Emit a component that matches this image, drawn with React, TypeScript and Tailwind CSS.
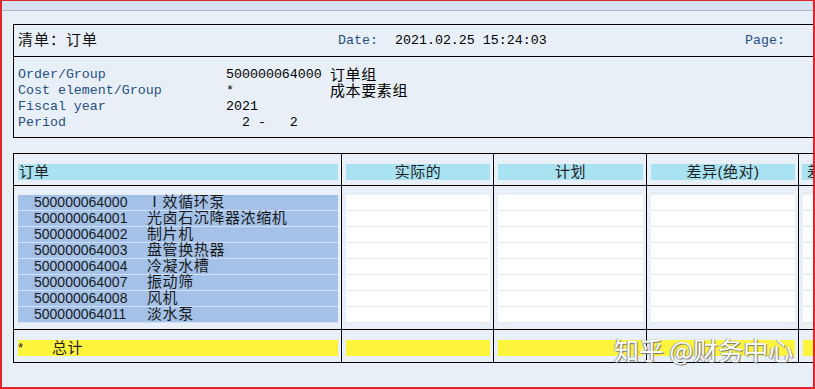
import React from "react";

const orders = [
  { id: "500000064000", name: "Ⅰ效循环泵" },
  { id: "500000064001", name: "光卤石沉降器浓缩机" },
  { id: "500000064002", name: "制片机" },
  { id: "500000064003", name: "盘管换热器" },
  { id: "500000064004", name: "冷凝水槽" },
  { id: "500000064007", name: "振动筛" },
  { id: "500000064008", name: "风机" },
  { id: "500000064011", name: "淡水泵" },
];

const mono = "font-['Liberation_Mono','Noto_Sans_CJK_SC',monospace]";
const cjk = "font-['Liberation_Sans','Noto_Sans_CJK_SC',sans-serif]";
const cols = "grid grid-cols-[328px_152px_153px_152px_120px]";

function InfoRow({ label, value, text }: { label: string; value: string; text?: string }) {
  return (
    <div className="flex h-[16px] items-center">
      <div className="w-[208px] text-[#1f4f86]">{label}</div>
      <div className="w-[104px] whitespace-pre text-black">{value}</div>
      {text && <div className={`${cjk} text-[15px] tracking-[0.6px] text-black`}>{text}</div>}
    </div>
  );
}

export default function App() {
  return (
    <div className="relative h-[389px] w-[815px] overflow-hidden border-x-2 border-t border-b-2 border-[#e0262b] bg-[#e9eff7]">
      <div className="h-[10px] border-b border-[#aeb7c4] bg-[#d6e2f0]" />

      {/* report header */}
      <div className={`${mono} ml-[11px] mt-[13px] w-[820px] border border-black text-[13.3px]`}>
        <div className="flex h-[32px] items-center border-b border-black">
          <div className={`${cjk} w-[324px] pl-[4px] text-[15px] tracking-[1px] text-[#111]`}>清单：订单</div>
          <div className="w-[57px] text-[#1f4f86]">Date:</div>
          <div className="w-[350px] text-black">2021.02.25 15:24:03</div>
          <div className="text-[#1f4f86]">Page:</div>
        </div>
        <div className="h-[80px] pl-[4px] pt-[10px]">
          <InfoRow label="Order/Group" value="500000064000" text="订单组" />
          <InfoRow label="Cost element/Group" value="*" text="成本要素组" />
          <InfoRow label="Fiscal year" value="2021" />
          <InfoRow label="Period" value="  2 -   2" />
        </div>
      </div>

      {/* table */}
      <div className={`${cjk} ml-[11px] mt-[15px] w-[820px] border-y border-l border-black text-[#222]`}>
        <div className={`${cols} h-[32px] border-b border-black`}>
          <div className="border-r border-black pl-[4px] pr-[3px] pt-[10px]">
            <div className="flex h-[16px] items-center bg-[#a9e2f1] pl-[1px] text-[15px]">订单</div>
          </div>
          {["实际的", "计划", "差异(绝对)"].map((h) => (
            <div key={h} className="border-r border-black pl-[4px] pr-[3px] pt-[10px]">
              <div className="flex h-[16px] items-center justify-center bg-[#a9e2f1] text-[15px] tracking-[0.5px]">{h}</div>
            </div>
          ))}
          <div className="border-r border-black pl-[3px] pt-[10px]">
            <div className="flex h-[16px] items-center bg-[#a9e2f1] pl-[5px] text-[15px]">差异(%)</div>
          </div>
        </div>

        <div className={`${cols} h-[144px] border-b border-black`}>
          <div className="border-r border-black pl-[4px] pr-[3px] pt-[9px]">
            {orders.map((o) => (
              <div key={o.id} className="flex h-[16px] items-center border-b border-[#d3e1f3] bg-[#a4c2e9]">
                <span className="w-[129px] pl-[16px] text-[14px] text-[#1a1a1a]">{o.id}</span>
                <span className="text-[15px] tracking-[0.6px] text-[#1a1a1a]">{o.name}</span>
              </div>
            ))}
          </div>
          {[0, 1, 2, 3].map((c) => (
            <div key={c} className="border-r border-black pl-[4px] pr-[3px] pt-[9px]">
              {orders.map((o) => (
                <div key={o.id} className="h-[16px] border-b border-[#e4e8ee] bg-white" />
              ))}
            </div>
          ))}
        </div>

        <div className={`${cols} h-[32px]`}>
          <div className="border-r border-black pl-[4px] pr-[3px] pt-[10px]">
            <div className="flex h-[16px] items-center bg-[#fff43c] text-[15px]">
              <span className="w-[34px] text-[13px]">*</span>
              <span className="tracking-[0.5px]">总计</span>
            </div>
          </div>
          {[0, 1, 2, 3].map((c) => (
            <div key={c} className="border-r border-black pl-[4px] pr-[3px] pt-[10px]">
              <div className="h-[16px] bg-[#fff43c]" />
            </div>
          ))}
        </div>
      </div>

      <div className="absolute left-[612px] top-[336px] font-['Noto_Sans_CJK_SC',sans-serif] text-[25px] leading-none text-white [text-shadow:1px_1px_1px_#777,-1px_0_1px_#999]">
        知乎 @财务中心
      </div>
    </div>
  );
}
